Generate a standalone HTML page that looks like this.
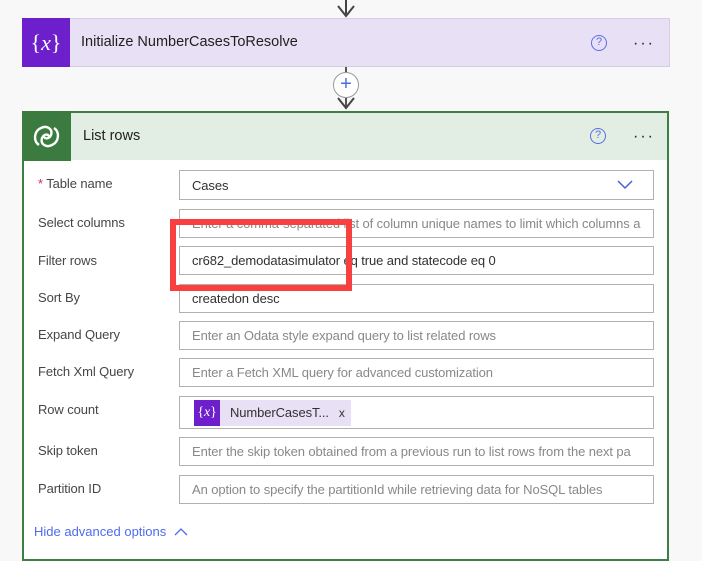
<!DOCTYPE html>
<html><head><meta charset="utf-8"><style>
*{margin:0;padding:0;box-sizing:border-box}
body{width:702px;height:545px;background:#f8f8f8;font-family:"Segoe UI","Liberation Sans",sans-serif;position:relative;overflow:hidden;color:#323130}
.a{position:absolute}
.lbl{position:absolute;left:38px;font-size:13px;color:#484644;letter-spacing:-0.1px}
.inp{position:absolute;left:179px;width:475px;background:#fff;border:1px solid #b3b0ad;font-size:13px;letter-spacing:-0.1px;padding-left:12px;white-space:nowrap;overflow:hidden;display:flex;align-items:center}
.ph{color:#8a8886}
.dots{position:absolute;font-size:16px;letter-spacing:2px;color:#222}
</style></head><body>
<div class="a" style="left:345px;top:0;width:2px;height:14px;background:#444"></div>
<svg class="a" style="left:336px;top:4px" width="20" height="14"><path d="M2 2 L10 12 L18 2" fill="none" stroke="#444" stroke-width="2"/></svg>
<div class="a" style="left:22px;top:18px;width:648px;height:49px;background:#e8e0f5;border:1px solid #d5cde3"></div>
<div class="a" style="left:22px;top:18px;width:48px;height:49px;background:#6d1fcc;color:#fff;font-family:'Liberation Serif',serif;font-size:22px;display:flex;align-items:center;justify-content:center">{<i>x</i>}</div>
<div class="a" style="left:81px;top:34px;font-size:14.5px;color:#201f1e">Initialize NumberCasesToResolve</div>
<div class="a" style="left:591px;top:35px;width:16px;height:16px;border:1.5px solid #5b6ee6;border-radius:50%;color:#5b6ee6;font-size:11px;text-align:center;line-height:13px">?</div>
<div class="dots" style="left:633px;top:35px">···</div>
<div class="a" style="left:345px;top:67px;width:2px;height:40px;background:#555"></div>
<div class="a" style="left:333px;top:72px;width:26px;height:26px;border-radius:50%;background:#fff;border:1px solid #999;color:#4a6fd6;font-size:20px;text-align:center;line-height:22px">+</div>
<svg class="a" style="left:336px;top:96px" width="20" height="14"><path d="M2 2 L10 12 L18 2" fill="none" stroke="#444" stroke-width="2"/></svg>
<div class="a" style="left:22px;top:111px;width:647px;height:450px;background:#fff;border:2px solid #3e7d43"></div>
<div class="a" style="left:24px;top:113px;width:643px;height:47px;background:#e2ede3"></div>
<div class="a" style="left:22px;top:111px;width:49px;height:50px;background:#3b7b40"></div>
<svg class="a" style="left:31px;top:121px" width="31" height="31" viewBox="0 0 31 31"><g fill="none" stroke="#fff" stroke-width="2.4"><path d="M8 24 C2 20 3 10 10 7 C16 4 22 8 20 14 C18 19 12 18 13 14"/><path d="M23 7 C29 11 28 21 21 24 C15 27 9 23 11 17 C13 12 19 13 18 17"/></g></svg>
<div class="a" style="left:83px;top:128px;font-size:14.5px;color:#201f1e">List rows</div>
<div class="a" style="left:590px;top:128px;width:16px;height:16px;border:1.5px solid #5b6ee6;border-radius:50%;color:#5b6ee6;font-size:11px;text-align:center;line-height:13px">?</div>
<div class="dots" style="left:633px;top:128px">···</div>

<div class="lbl" style="top:176px"><span style="color:#c4314b">*</span> Table name</div>
<div class="inp" style="top:170px;height:30px">Cases<svg style="position:absolute;right:20px;top:9px" width="16" height="10"><path d="M1 1 L8 8 L15 1" fill="none" stroke="#4a5fd8" stroke-width="1.5"/></svg></div>
<div class="lbl" style="top:215px">Select columns</div>
<div class="inp ph" style="top:209px;height:29px">Enter a comma-separated list of column unique names to limit which columns a</div>
<div class="lbl" style="top:253px">Filter rows</div>
<div class="inp" style="top:246px;height:29px">cr682_demodatasimulator eq true and statecode eq 0</div>
<div class="lbl" style="top:290px">Sort By</div>
<div class="inp" style="top:284px;height:29px">createdon desc</div>
<div class="lbl" style="top:327px">Expand Query</div>
<div class="inp ph" style="top:321px;height:29px">Enter an Odata style expand query to list related rows</div>
<div class="lbl" style="top:364px">Fetch Xml Query</div>
<div class="inp ph" style="top:358px;height:29px">Enter a Fetch XML query for advanced customization</div>
<div class="lbl" style="top:402px">Row count</div>
<div class="inp" style="top:396px;height:33px;padding-left:14px"><div style="display:flex;align-items:center;background:#e8e0f5;height:26px;padding-right:6px"><div style="width:26px;height:26px;background:#6d1fcc;color:#fff;font-family:'Liberation Serif',serif;font-size:14px;text-align:center;line-height:25px">{<i>x</i>}</div><span style="margin-left:10px">NumberCasesT...</span><span style="margin-left:10px;font-size:12px">x</span></div></div>
<div class="lbl" style="top:443px">Skip token</div>
<div class="inp ph" style="top:437px;height:29px">Enter the skip token obtained from a previous run to list rows from the next pa</div>
<div class="lbl" style="top:481px">Partition ID</div>
<div class="inp ph" style="top:475px;height:29px">An option to specify the partitionId while retrieving data for NoSQL tables</div>
<div class="a" style="left:34px;top:524px;font-size:13px;color:#4f6bed">Hide advanced options <svg width="14" height="9" style="margin-left:4px"><path d="M1 8 L7 2 L13 8" fill="none" stroke="#4f6bed" stroke-width="1.3"/></svg></div>
<div class="a" style="left:170px;top:219px;width:182px;height:72px;border:6px solid #f84040"></div>
</body></html>
